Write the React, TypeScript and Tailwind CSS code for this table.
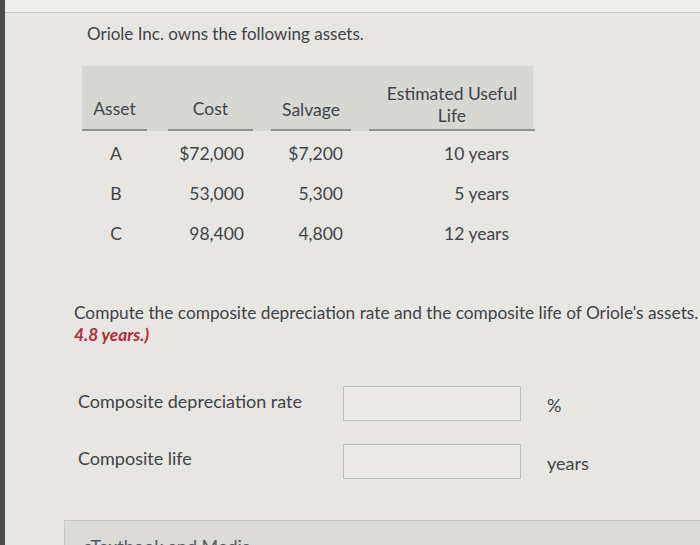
import React from "react";

const rows = [
  { asset: "A", cost: "$72,000", salvage: "$7,200", life: "10 years" },
  { asset: "B", cost: "53,000", salvage: "5,300", life: "5 years" },
  { asset: "C", cost: "98,400", salvage: "4,800", life: "12 years" },
];

export default function App() {
  return (
    <div
      className="flex w-[700px] h-[545px] overflow-hidden bg-[#e7e6e2] text-[#404348]"
      style={{ fontFamily: "Lato, 'Open Sans', sans-serif" }}
    >
      <div className="w-[5px] shrink-0 bg-[#4d4d4d]" />
      <div className="flex flex-col flex-1">
        <div className="h-[13px] shrink-0 bg-[#eeeeeb] border-b border-[#c9c9c5]" />

        <h1 className="ml-[82px] mt-[9px] text-[17px] leading-[24px]">
          Oriole Inc. owns the following assets.
        </h1>

        {/* assets table */}
        <div className="ml-[77px] mt-[20px] w-[451px] text-[17.5px]">
          <div className="grid grid-cols-[65px_85px_80px_166px] gap-x-[18px] h-[65px] bg-[#d7d7d4] pl-[3px]">
            <div className="flex items-end justify-center pb-[7px] border-b-2 border-[#8d8f92] -ml-[3px] w-[65px]">
              Asset
            </div>
            <div className="flex items-end justify-center pb-[7px] border-b-2 border-[#8d8f92]">
              Cost
            </div>
            <div className="flex items-end justify-center pb-[6px] border-b-2 border-[#8d8f92]">
              Salvage
            </div>
            <div className="flex items-end justify-center text-center leading-[22px] pb-[2px] border-b-2 border-[#8d8f92]">
              Estimated Useful
              <br />
              Life
            </div>
          </div>
          <div className="pl-[3px] pt-[3px]">
            {rows.map((r) => (
              <div
                key={r.asset}
                className="grid grid-cols-[65px_85px_80px_166px] gap-x-[18px] h-[40px] items-center"
              >
                <div className="text-center -ml-[3px]">{r.asset}</div>
                <div className="text-right pr-[9px]">{r.cost}</div>
                <div className="text-right pr-[8px]">{r.salvage}</div>
                <div className="text-right pr-[26px]">{r.life}</div>
              </div>
            ))}
          </div>
        </div>

        <p className="ml-[69px] mt-[48px] text-[17.3px] leading-[22px] whitespace-nowrap">
          Compute the composite depreciation rate and the composite life of Oriole's assets.
          <br />
          <span className="text-[#b4263c] italic font-bold">4.8 years.)</span>
        </p>

        {/* answer inputs */}
        <div className="ml-[73px] mt-[40px] flex flex-col gap-[23px] text-[18px]">
          <div className="flex items-center">
            <div className="w-[265px] -mt-[4px]">Composite depreciation rate</div>
            <div className="w-[178px] h-[35px] border border-[#bdbdb9] bg-[#eceae7]" />
            <div className="ml-[26px] mt-[4px]">%</div>
          </div>
          <div className="flex items-center">
            <div className="w-[265px] -mt-[6px]">Composite life</div>
            <div className="w-[178px] h-[35px] border border-[#bdbdb9] bg-[#eceae7]" />
            <div className="ml-[26px] mt-[4px]">years</div>
          </div>
        </div>

        <div className="ml-[59px] mt-[41px] h-[40px] bg-[#dcdbd8] border-t border-l border-[#c7c7c3] pl-[18px] pt-[12px] text-[18px] text-[#555a60]">
          eTextbook and Media
        </div>
      </div>
    </div>
  );
}
